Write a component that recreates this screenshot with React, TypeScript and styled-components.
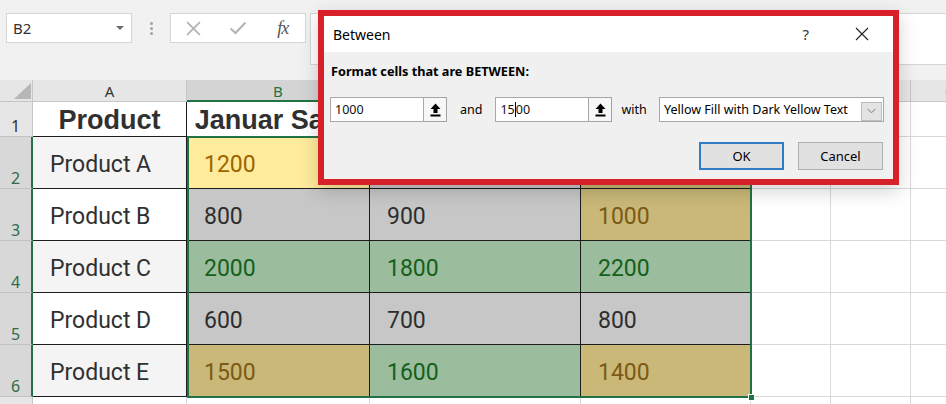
import React from 'react';
import styled, { createGlobalStyle } from 'styled-components';

const GlobalStyle = createGlobalStyle`
  html, body { margin: 0; padding: 0; background: #ffffff; }
  body { font-family: "Noto Sans", "Liberation Sans", sans-serif; }
  * { box-sizing: border-box; }
`;

const Page = styled.div`
  position: relative;
  width: 946px;
  height: 404px;
  overflow: hidden;
  background: #ffffff;
`;

/* ---------- formula bar ---------- */
const TopBar = styled.div`
  height: 80px;
  background: #f1f1f1;
  display: flex;
  align-items: flex-start;
  padding: 13px 0 0 6px;
`;

const NameBox = styled.div`
  width: 126px;
  height: 30px;
  background: #ffffff;
  border: 1px solid #d6d6d6;
  display: flex;
  align-items: center;
  justify-content: space-between;
  padding: 0 7px 0 6px;
  font-family: "Noto Sans", sans-serif;
  font-size: 15px;
  color: #333333;
`;

const DownTriangle = styled.span`
  width: 0;
  height: 0;
  border-left: 4px solid transparent;
  border-right: 4px solid transparent;
  border-top: 4px solid #6b6b6b;
`;

const Grip = styled.div`
  width: 38px;
  height: 30px;
  display: flex;
  flex-direction: column;
  align-items: center;
  justify-content: center;
  gap: 2px;
`;

const GripDot = styled.span`
  width: 3px;
  height: 3px;
  border-radius: 50%;
  background: #a3a3a3;
`;

const FxGroup = styled.div`
  width: 136px;
  height: 30px;
  background: #ffffff;
  border: 1px solid #d6d6d6;
  display: grid;
  grid-template-columns: repeat(3, 1fr);
`;

const FxSlot = styled.div`
  display: flex;
  align-items: center;
  justify-content: center;
`;

const FxText = styled.span`
  font-family: "Liberation Serif", serif;
  font-style: italic;
  font-size: 18px;
  color: #555555;
  letter-spacing: -1px;
`;

const FormulaInput = styled.div`
  flex: 1;
  margin-left: 4px;
  height: 52px;
  background: #ffffff;
  border: 1px solid #d6d6d6;
  border-right: none;
`;

/* ---------- sheet ---------- */
const sheetTemplate = `
  grid-template-columns: 33px 154px 183px 211px 170px 80px 80px 80px;
  grid-template-rows: 22px 35px repeat(6, 52px);
`;

const SheetStack = styled.div`
  display: grid;
`;

const CellGrid = styled.div`
  grid-area: 1 / 1;
  display: grid;
  ${sheetTemplate}
`;

const OverlayGrid = styled.div`
  grid-area: 1 / 1;
  display: grid;
  ${sheetTemplate}
  pointer-events: none;
  z-index: 1;
`;

const Corner = styled.div`
  background: #e6e6e6;
  border-right: 1px solid #c6c6c6;
  border-bottom: 1px solid #c6c6c6;
  display: flex;
  align-items: flex-end;
  justify-content: flex-end;
  padding: 0 1px 2px 0;
`;

const CornerTriangle = styled.span`
  width: 0;
  height: 0;
  border-left: 17px solid transparent;
  border-bottom: 16px solid #b7b7b7;
`;

const ColHead = styled.div<{ $selected?: boolean }>`
  background: ${(p) => (p.$selected ? '#d4d4d4' : '#e6e6e6')};
  color: ${(p) => (p.$selected ? '#217346' : '#333333')};
  border-right: 1px solid #c6c6c6;
  border-bottom: ${(p) => (p.$selected ? '2px solid #217346' : '1px solid #c6c6c6')};
  display: flex;
  align-items: center;
  justify-content: center;
  padding-top: ${(p) => (p.$selected ? '1px' : '0')};
  font-family: "Noto Sans", sans-serif;
  font-size: 15px;
  line-height: 16px;
`;

const RowHead = styled.div<{ $selected?: boolean }>`
  background: ${(p) => (p.$selected ? '#d8d8d8' : '#e6e6e6')};
  color: ${(p) => (p.$selected ? '#2f6b48' : '#333333')};
  border-right: ${(p) => (p.$selected ? '2px solid #217346' : '1px solid #c6c6c6')};
  border-bottom: 1px solid #c2c2c2;
  display: flex;
  align-items: flex-end;
  justify-content: center;
  padding: 0 ${(p) => (p.$selected ? '0' : '1px')} 2px 0;
  font-family: "Noto Sans", sans-serif;
  font-size: 16px;
  line-height: 16px;
`;

const Cell = styled.div<{
  $bg?: string;
  $fg?: string;
  $dark?: boolean;
  $header?: boolean;
}>`
  background: ${(p) => p.$bg || '#ffffff'};
  color: ${(p) => p.$fg || '#303030'};
  border-right: 1px solid ${(p) => (p.$dark ? '#1c1c1c' : '#d9d9d9')};
  border-bottom: 1px solid ${(p) => (p.$dark ? '#1c1c1c' : '#d9d9d9')};
  display: flex;
  align-items: center;
  justify-content: ${(p) => (p.$header ? 'center' : 'flex-start')};
  padding: ${(p) => (p.$header ? '3px 0 0 0' : '4px 0 0 17px')};
  white-space: nowrap;
  overflow: hidden;
  font-family: ${(p) => (p.$header ? '"Liberation Sans", Arial, sans-serif' : 'Roboto, "Noto Sans", sans-serif')};
  font-weight: ${(p) => (p.$header ? 700 : 400)};
  font-size: ${(p) => (p.$header ? '27px' : '23px')};
`;

const SelectionBox = styled.div`
  grid-column: 3 / 6;
  grid-row: 3 / 8;
  margin: -1px -1px -1px 0;
  border: 2px solid #217346;
  position: relative;
`;

const FillHandle = styled.span`
  position: absolute;
  right: -5px;
  bottom: -5px;
  width: 7px;
  height: 7px;
  background: #217346;
  border: 1px solid #ffffff;
`;

/* ---------- dialog ---------- */
const DialogFrame = styled.div`
  position: absolute;
  left: 318px;
  top: 10px;
  width: 581px;
  height: 175px;
  border: 6px solid #d8202b;
  box-shadow: 0 6px 18px rgba(0, 0, 0, 0.18);
  display: flex;
  flex-direction: column;
  z-index: 5;
  font-family: "Noto Sans", "Open Sans", sans-serif;
  color: #000000;
`;

const TitleBar = styled.div`
  height: 37px;
  background: #ffffff;
  display: flex;
  align-items: center;
  padding: 0 24px 0 9px;
  font-size: 14px;
`;

const TitleText = styled.span`
  flex: 1;
`;

const HelpMark = styled.span`
  font-size: 15px;
  color: #333333;
  margin-right: 46px;
`;

const DialogBody = styled.div`
  flex: 1;
  background: #f0f0f0;
  padding: 11px 9px 9px 7px;
  display: flex;
  flex-direction: column;
`;

const BodyLabel = styled.div`
  font-size: 12.7px;
  font-weight: 700;
  line-height: 16px;
`;

const InputRow = styled.div`
  margin-top: 18px;
  height: 25px;
  display: flex;
  align-items: center;
  font-size: 12.5px;
`;

const RefBox = styled.div<{ $first?: boolean }>`
  width: 117px;
  height: 25px;
  display: flex;
  margin-left: ${(p) => (p.$first ? '-1px' : '0')};
`;

const RefField = styled.div`
  flex: 1;
  background: #ffffff;
  border: 1px solid #a8a8a8;
  display: flex;
  align-items: center;
  padding-left: 4px;
  font-size: 12.5px;
  color: #111111;
`;

const RefButton = styled.div`
  width: 23px;
  background: #f7f7f7;
  border: 1px solid #a4a4a4;
  border-left: none;
  display: flex;
  align-items: center;
  justify-content: center;
`;

const Caret = styled.span`
  display: inline-block;
  width: 1px;
  height: 15px;
  background: #000000;
`;

const RowLabel = styled.span<{ $ml: number; $mr: number }>`
  margin-left: ${(p) => p.$ml}px;
  margin-right: ${(p) => p.$mr}px;
`;

const Spacer = styled.span`
  flex: 1;
`;

const SelectBox = styled.div`
  width: 225px;
  height: 25px;
  background: #ffffff;
  border: 1px solid #a8a8a8;
  display: flex;
  align-items: center;
  padding: 0 1px 0 4px;
  font-size: 12.5px;
`;

const SelectText = styled.span`
  flex: 1;
  white-space: nowrap;
`;

const SelectButton = styled.div`
  width: 21px;
  height: 19px;
  margin-top: 3px;
  background: #e3e3e3;
  border: 1px solid #bdbdbd;
  display: flex;
  align-items: center;
  justify-content: center;
`;

const ButtonRow = styled.div`
  margin-top: 20px;
  display: flex;
  justify-content: flex-end;
  gap: 14px;
  padding-right: 1px;
`;

const DialogButton = styled.div<{ $primary?: boolean }>`
  width: 85px;
  height: 28px;
  background: #e1e1e1;
  border: ${(p) => (p.$primary ? '2px solid #2f7bc4' : '1px solid #adadad')};
  display: flex;
  align-items: center;
  justify-content: center;
  font-size: 13px;
`;

/* ---------- icons ---------- */
const CrossIcon = ({ size, color, w }: { size: number; color: string; w: number }) => (
  <svg width={size} height={size} viewBox="0 0 14 14">
    <path d="M1 1 L13 13 M13 1 L1 13" stroke={color} strokeWidth={w} fill="none" />
  </svg>
);

const CheckIcon = () => (
  <svg width="18" height="14" viewBox="0 0 18 14">
    <path d="M1.5 7.5 L6.5 12 L16.5 1.5" stroke="#b3b3b3" strokeWidth="2" fill="none" />
  </svg>
);

const UploadIcon = () => (
  <svg width="11" height="14" viewBox="0 0 11 14">
    <path d="M5.5 0.5 L10.5 6 H7.5 V10 H3.5 V6 H0.5 Z" fill="#000" />
    <rect x="0.5" y="11.5" width="10" height="2" fill="#000" />
  </svg>
);

const ChevronIcon = () => (
  <svg width="9" height="6" viewBox="0 0 9 6">
    <path d="M0.5 0.8 L4.5 4.8 L8.5 0.8" stroke="#7a7a7a" strokeWidth="1" fill="none" />
  </svg>
);

/* ---------- data ---------- */
type Fill = 'active' | 'tan' | 'green' | 'gray';
const fills: Record<Fill, { bg: string; fg: string }> = {
  active: { bg: '#ffeb9c', fg: '#9c6500' },
  tan: { bg: '#c9b878', fg: '#7c5a14' },
  green: { bg: '#9bbd9e', fg: '#14601c' },
  gray: { bg: '#c7c7c7', fg: '#2e2e2e' },
};

const columns = ['A', 'B', 'C', 'D', 'E', 'F', 'G'];

const headerRow = ['Product', 'Januar Sales', 'Februar Sales', 'März Sales'];

const dataRows: { name: string; values: [string, Fill][] }[] = [
  { name: 'Product A', values: [['1200', 'active'], ['950', 'gray'], ['1300', 'tan']] },
  { name: 'Product B', values: [['800', 'gray'], ['900', 'gray'], ['1000', 'tan']] },
  { name: 'Product C', values: [['2000', 'green'], ['1800', 'green'], ['2200', 'green']] },
  { name: 'Product D', values: [['600', 'gray'], ['700', 'gray'], ['800', 'gray']] },
  { name: 'Product E', values: [['1500', 'tan'], ['1600', 'green'], ['1400', 'tan']] },
];

const EmptyCells = ({ count }: { count: number }) => (
  <>
    {Array.from({ length: count }).map((_, i) => (
      <Cell key={i} />
    ))}
  </>
);

export default function App() {
  return (
    <Page>
      <GlobalStyle />
      <TopBar>
        <NameBox>
          <span>B2</span>
          <DownTriangle />
        </NameBox>
        <Grip>
          <GripDot />
          <GripDot />
          <GripDot />
        </Grip>
        <FxGroup>
          <FxSlot>
            <CrossIcon size={15} color="#b3b3b3" w={1.6} />
          </FxSlot>
          <FxSlot>
            <CheckIcon />
          </FxSlot>
          <FxSlot>
            <FxText>fx</FxText>
          </FxSlot>
        </FxGroup>
        <FormulaInput />
      </TopBar>

      <SheetStack>
        <CellGrid>
          <Corner>
            <CornerTriangle />
          </Corner>
          {columns.map((c) => (
            <ColHead key={c} $selected={c === 'B'}>
              {c}
            </ColHead>
          ))}

          <RowHead>1</RowHead>
          {headerRow.map((h) => (
            <Cell key={h} $dark $header>
              {h}
            </Cell>
          ))}
          <EmptyCells count={3} />

          {dataRows.map((r, i) => (
            <React.Fragment key={r.name}>
              <RowHead $selected>{i + 2}</RowHead>
              <Cell $dark $bg={i % 2 === 0 ? '#f4f4f4' : '#ffffff'}>
                {r.name}
              </Cell>
              {r.values.map(([v, f], j) => (
                <Cell key={j} $dark $bg={fills[f].bg} $fg={fills[f].fg}>
                  {v}
                </Cell>
              ))}
              <EmptyCells count={3} />
            </React.Fragment>
          ))}

          <RowHead />
          <EmptyCells count={7} />
        </CellGrid>
        <OverlayGrid>
          <SelectionBox>
            <FillHandle />
          </SelectionBox>
        </OverlayGrid>
      </SheetStack>

      <DialogFrame>
        <TitleBar>
          <TitleText>Between</TitleText>
          <HelpMark>?</HelpMark>
          <CrossIcon size={14} color="#222" w={1.1} />
        </TitleBar>
        <DialogBody>
          <BodyLabel>Format cells that are BETWEEN:</BodyLabel>
          <InputRow>
            <RefBox $first>
              <RefField>1000</RefField>
              <RefButton>
                <UploadIcon />
              </RefButton>
            </RefBox>
            <RowLabel $ml={13} $mr={13}>
              and
            </RowLabel>
            <RefBox>
              <RefField>
                15
                <Caret />
                00
              </RefField>
              <RefButton>
                <UploadIcon />
              </RefButton>
            </RefBox>
            <RowLabel $ml={9} $mr={12}>
              with
            </RowLabel>
            <Spacer />
            <SelectBox>
              <SelectText>Yellow Fill with Dark Yellow Text</SelectText>
              <SelectButton>
                <ChevronIcon />
              </SelectButton>
            </SelectBox>
          </InputRow>
          <ButtonRow>
            <DialogButton $primary>OK</DialogButton>
            <DialogButton>Cancel</DialogButton>
          </ButtonRow>
        </DialogBody>
      </DialogFrame>
    </Page>
  );
}
